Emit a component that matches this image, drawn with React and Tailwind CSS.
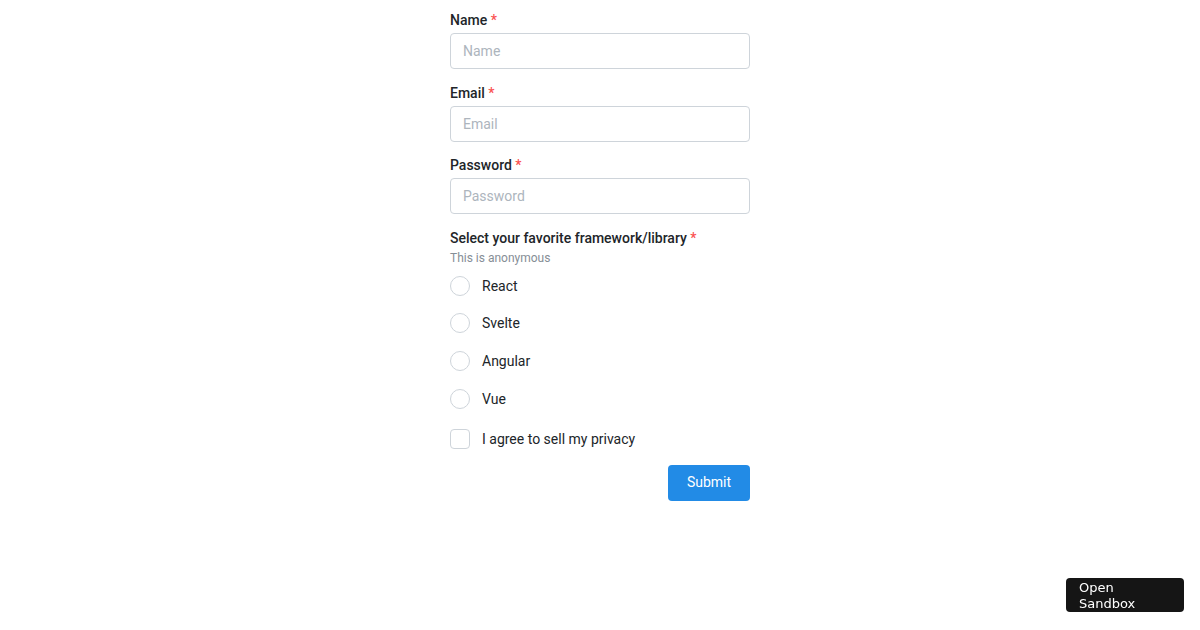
export default function App() {
  const options = ["React", "Svelte", "Angular", "Vue"];
  const fields = [
    { label: "Name", type: "text" },
    { label: "Email", type: "email" },
    { label: "Password", type: "password" },
  ];

  return (
    <div className="min-h-screen bg-white font-['Roboto',sans-serif] text-[#212529]">
      <form className="mx-auto flex w-[300px] flex-col pt-[9px]">
        {fields.map((f, i) => (
          <div key={f.label} className={i === 0 ? "" : "mt-[12.5px]"}>
            <label className="block text-[14px] font-medium leading-[22px]">
              {f.label} <span className="text-[#fa5252]">*</span>
            </label>
            <input
              type={f.type}
              placeholder={f.label}
              className="mt-[2px] block h-[36px] w-full rounded-[4px] border border-[#ced4da] bg-white px-[12px] text-[14px] outline-none placeholder:text-[#adb5bd]"
            />
          </div>
        ))}

        <div className="mt-[12.5px]">
          <div className="text-[14px] font-medium leading-[22px]">
            Select your favorite framework/library <span className="text-[#fa5252]">*</span>
          </div>
          <div className="text-[12px] leading-[18px] text-[#868e96]">This is anonymous</div>
          <div className="mt-[9px] flex flex-col gap-[17.7px]">
            {options.map((o) => (
              <label key={o} className="flex items-center gap-[12px] text-[14px] leading-[20px]">
                <span className="h-[20px] w-[20px] shrink-0 rounded-full border border-[#ced4da] bg-white" />
                {o}
              </label>
            ))}
          </div>
        </div>

        <label className="mt-[20px] flex items-center gap-[12px] text-[14px] leading-[20px]">
          <span className="h-[20px] w-[20px] shrink-0 rounded-[4px] border border-[#ced4da] bg-white" />
          I agree to sell my privacy
        </label>

        <div className="mt-[16px] flex justify-end">
          <button
            type="button"
            className="h-[36px] w-[82px] rounded-[4px] bg-[#228be6] text-[14px] font-normal text-white"
          >
            Submit
          </button>
        </div>
      </form>

      <div className="fixed bottom-[18px] right-[16px] w-[118px] rounded-[4px] bg-[#151515] px-[13px] pt-[2px] font-['DejaVu_Sans',sans-serif] text-[13px] leading-[16px] text-white">
        Open Sandbox
      </div>
    </div>
  );
}
